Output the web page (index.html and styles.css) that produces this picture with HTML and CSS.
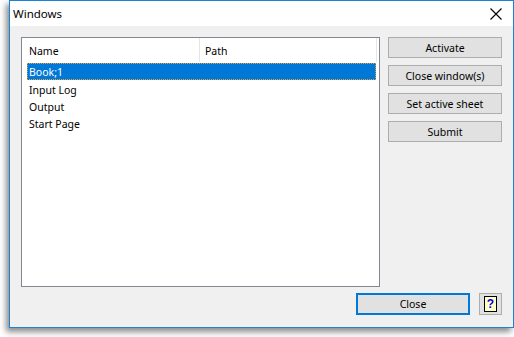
FILE: index.html
```html
<!DOCTYPE html>
<html>
<head>
<meta charset="utf-8">
<link rel="stylesheet" href="styles.css">
</head>
<body>
<div class="window">
  <div class="titlebar">
    <span class="title">Windows</span>
    <svg class="x" width="12" height="12" viewBox="0 0 12 12"><path d="M0.5 0.5 L11.5 11.5 M11.5 0.5 L0.5 11.5" stroke="#000" stroke-width="1.1" fill="none"/></svg>
  </div>
  <div class="content">
    <div class="main">
      <div class="list">
        <div class="header">
          <div class="col name">Name</div>
          <div class="col path">Path</div>
        </div>
        <div class="rows">
          <div class="row selected">Book;1</div>
          <div class="row">Input Log</div>
          <div class="row">Output</div>
          <div class="row">Start Page</div>
        </div>
      </div>
      <div class="buttons">
        <button class="btn">Activate</button>
        <button class="btn">Close window(s)</button>
        <button class="btn">Set active sheet</button>
        <button class="btn">Submit</button>
      </div>
    </div>
    <div class="footer">
      <button class="btn close">Close</button>
      <button class="btn help"><span class="helpicon">?</span></button>
    </div>
  </div>
</div>
</body>
</html>
```
FILE: styles.css
```css
html, body { margin: 0; padding: 0; background: #fff; }
body {
  font-family: "Noto Sans", "Open Sans", sans-serif;
  font-size: 10.5px;
  color: #000;
  width: 514px;
  height: 337px;
  overflow: hidden;
}
.window {
  margin-left: 9px;
  width: 503px;
  height: 326px;
  border: 1px solid #1883d7;
  background: #f0f0f0;
  box-shadow: -3px 4px 6px rgba(0,0,0,0.45);
  display: flex;
  flex-direction: column;
}
.titlebar {
  height: 25px;
  background: #fff;
  display: flex;
  align-items: center;
  justify-content: space-between;
  padding: 0 11px 0 3px;
}
.title { font-size: 11.5px; line-height: 14px; }
.x { display: block; margin-top: 1px; }
.content {
  flex: 1;
  display: flex;
  flex-direction: column;
  padding: 11px 11px 0 11px;
}
.main { display: flex; gap: 8px; }
.list {
  width: 357px;
  height: 248px;
  border: 1px solid #828790;
  background: #fff;
  display: flex;
  flex-direction: column;
}
.header {
  display: flex;
  height: 24px;
  width: 355px;
}
.col {
  display: flex;
  align-items: center;
  padding-left: 7px;
  padding-top: 1px;
  box-sizing: border-box;
  border-right: 1px solid #e5e5e5;
}
.name { width: 178px; }
.path { width: 177px; padding-left: 5px; }
.rows { padding: 1px 2px 0 5px; }
.row {
  height: 17px;
  line-height: 19px;
  padding-left: 2px;
  box-sizing: border-box;
}
.row + .row { line-height: 21px; }
.selected {
  background: #0078d7;
  color: #fff;
  outline: 1px dotted #e8a33d;
  outline-offset: -1px;
  margin-right: 1px;
}
.buttons {
  display: flex;
  flex-direction: column;
  gap: 7px;
}
.btn {
  font-family: inherit;
  font-size: 10.5px;
  color: #000;
  background: #e1e1e1;
  border: 1px solid #adadad;
  width: 114px;
  height: 21px;
  padding: 1px 0 0 0;
  margin: 0;
  line-height: 17px;
}
.footer {
  display: flex;
  justify-content: flex-end;
  align-items: center;
  gap: 9px;
  margin-top: 6px;
}
.close {
  width: 114px;
  height: 22px;
  border: 2px solid #0078d7;
}
.help {
  width: 23px;
  height: 22px;
  padding: 0;
  display: flex;
  align-items: center;
  justify-content: center;
}
.helpicon {
  width: 13px;
  height: 16px;
  box-sizing: border-box;
  border: 1px solid #000;
  background: #ffffc8;
  color: #0000e0;
  font-family: "Liberation Sans", sans-serif;
  font-weight: bold;
  font-size: 12px;
  line-height: 14px;
  text-align: center;
  display: block;
}
```
